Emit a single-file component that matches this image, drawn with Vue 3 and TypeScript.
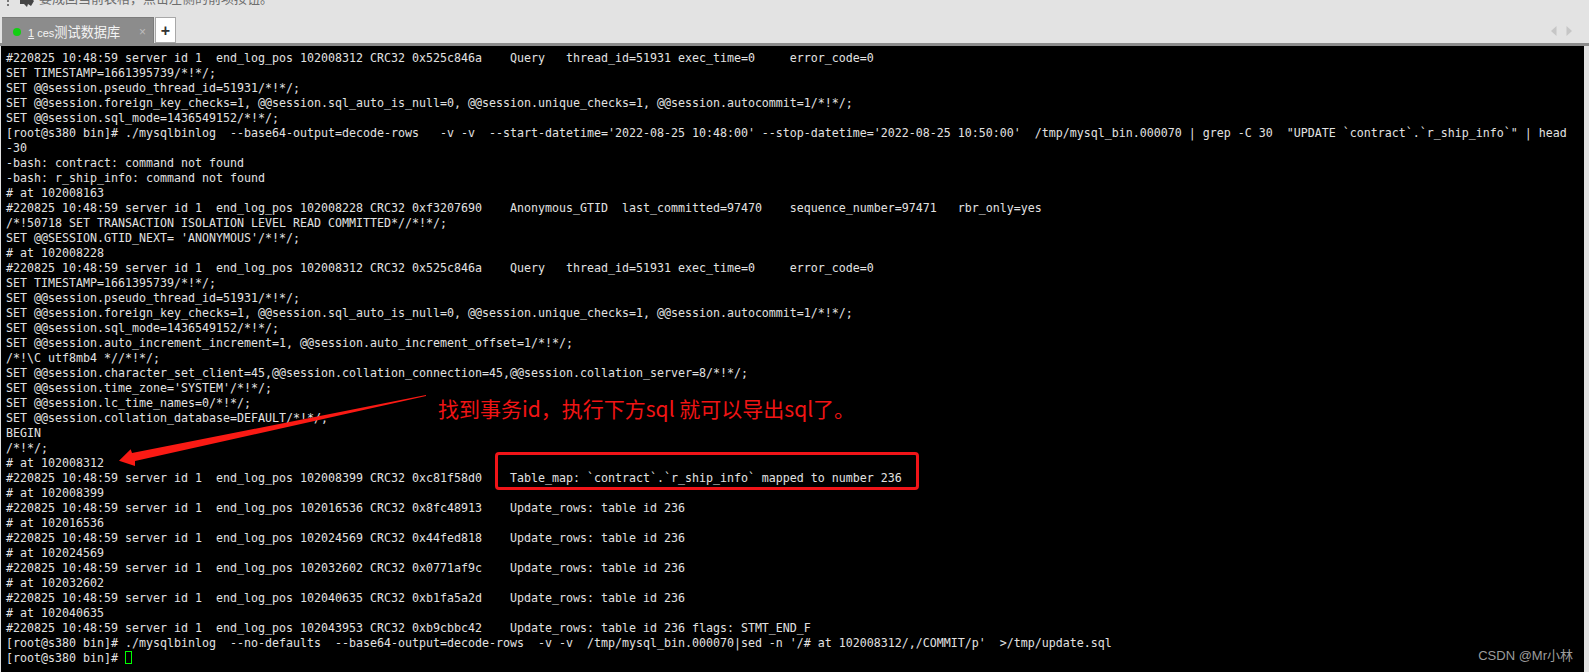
<script setup lang="ts">
const prefix = '#220825 10:48:59 server id 1  end_log_pos '
const lines: string[] = [
  prefix + "102008312 CRC32 0x525c846a    Query   thread_id=51931 exec_time=0     error_code=0",
  "SET TIMESTAMP=1661395739/*!*/;",
  "SET @@session.pseudo_thread_id=51931/*!*/;",
  "SET @@session.foreign_key_checks=1, @@session.sql_auto_is_null=0, @@session.unique_checks=1, @@session.autocommit=1/*!*/;",
  "SET @@session.sql_mode=1436549152/*!*/;",
  "[root@s380 bin]# ./mysqlbinlog  --base64-output=decode-rows   -v -v  --start-datetime='2022-08-25 10:48:00' --stop-datetime='2022-08-25 10:50:00'  /tmp/mysql_bin.000070 | grep -C 30  \"UPDATE `contract`.`r_ship_info`\" | head",
  "-30",
  "-bash: contract: command not found",
  "-bash: r_ship_info: command not found",
  "# at 102008163",
  prefix + "102008228 CRC32 0xf3207690    Anonymous_GTID  last_committed=97470    sequence_number=97471   rbr_only=yes",
  "/*!50718 SET TRANSACTION ISOLATION LEVEL READ COMMITTED*//*!*/;",
  "SET @@SESSION.GTID_NEXT= 'ANONYMOUS'/*!*/;",
  "# at 102008228",
  prefix + "102008312 CRC32 0x525c846a    Query   thread_id=51931 exec_time=0     error_code=0",
  "SET TIMESTAMP=1661395739/*!*/;",
  "SET @@session.pseudo_thread_id=51931/*!*/;",
  "SET @@session.foreign_key_checks=1, @@session.sql_auto_is_null=0, @@session.unique_checks=1, @@session.autocommit=1/*!*/;",
  "SET @@session.sql_mode=1436549152/*!*/;",
  "SET @@session.auto_increment_increment=1, @@session.auto_increment_offset=1/*!*/;",
  "/*!\\C utf8mb4 *//*!*/;",
  "SET @@session.character_set_client=45,@@session.collation_connection=45,@@session.collation_server=8/*!*/;",
  "SET @@session.time_zone='SYSTEM'/*!*/;",
  "SET @@session.lc_time_names=0/*!*/;",
  "SET @@session.collation_database=DEFAULT/*!*/;",
  "BEGIN",
  "/*!*/;",
  "# at 102008312",
  prefix + "102008399 CRC32 0xc81f58d0    Table_map: `contract`.`r_ship_info` mapped to number 236",
  "# at 102008399",
  prefix + "102016536 CRC32 0x8fc48913    Update_rows: table id 236",
  "# at 102016536",
  prefix + "102024569 CRC32 0x44fed818    Update_rows: table id 236",
  "# at 102024569",
  prefix + "102032602 CRC32 0x0771af9c    Update_rows: table id 236",
  "# at 102032602",
  prefix + "102040635 CRC32 0xb1fa5a2d    Update_rows: table id 236",
  "# at 102040635",
  prefix + "102043953 CRC32 0xb9cbbc42    Update_rows: table id 236 flags: STMT_END_F",
  "[root@s380 bin]# ./mysqlbinlog  --no-defaults  --base64-output=decode-rows  -v -v  /tmp/mysql_bin.000070|sed -n '/# at 102008312/,/COMMIT/p'  >/tmp/update.sql",
]
</script>

<template>
  <div class="app">
    <div class="hintbar">
      <span class="grip"></span>
      <svg class="hinticon" width="14" height="7" viewBox="0 0 14 7">
        <path d="M0 0h13l1 1-3 5-3-2-1 3-3-3-4 0z" fill="#444" />
      </svg>
      <span class="hint">要成回当前表格，点击左侧的前项按钮。</span>
    </div>
    <div class="tabbar">
      <div class="tab">
        <span class="dot"></span>
        <span class="tabtitle"><u>1</u> ces<span class="cjk">测试数据库</span></span>
        <span class="close">×</span>
      </div>
      <div class="plus">+</div>
      <div class="arrows">
        <svg width="21" height="10" viewBox="0 0 21 10">
          <path d="M5.500 0v10L0 5z" fill="#c6c6c6" />
          <path d="M15.500 0v10l5.500-5z" fill="#c6c6c6" />
        </svg>
      </div>
    </div>
    <div class="rule"></div>
    <div class="terminal">
      <div v-for="(line, i) in lines" :key="i" class="line">{{ line }}</div>
      <div class="line">[root@s380 bin]# <span class="cursor"></span></div>

      <svg class="arrow" width="320" height="80" viewBox="0 0 320 80">
        <path d="M310 0 L16 58 L14.700 54.300 L3 65.700 L19 71 L19 66 L310 1z" fill="#fa1a14" />
      </svg>
      <div class="note">找到事务id，执行下方sql 就可以导出sql了。</div>
      <div class="box"></div>
      <div class="mark">CSDN @Mr小林</div>
    </div>
  </div>
</template>

<style>
html, body { margin: 0; background: #e3e3e3; }
</style>

<style scoped>
.app {
  width: 1589px;
  height: 672px;
  display: flex;
  flex-direction: column;
  overflow: hidden;
  background: #e3e3e3;
  font-family: "Liberation Sans", "Noto Sans CJK SC", sans-serif;
}
.hintbar {
  height: 17px;
  flex: none;
  display: flex;
  align-items: flex-start;
  overflow: hidden;
  padding-left: 7px;
  box-sizing: border-box;
}
.grip {
  width: 2px;
  height: 8px;
  margin-right: 11px;
  flex: none;
  background: repeating-linear-gradient(#777 0 2px, transparent 2px 4px);
}
.hinticon { margin-right: 5px; flex: none; }
.hint {
  font-size: 13px;
  line-height: 14px;
  margin-top: -9px;
  color: #6e6e6e;
  font-family: "Noto Sans CJK SC", sans-serif;
}
.tabbar {
  height: 26px;
  flex: none;
  display: flex;
  align-items: stretch;
  padding-left: 2px;
}
.tab {
  width: 152px;
  box-sizing: border-box;
  background: #8c8c8c;
  border-top: 1px solid #7c7c7c;
  border-right: 1px solid #7c7c7c;
  display: flex;
  align-items: center;
  padding-left: 11px;
  padding-top: 2px;
  color: #f4f4f4;
  font-size: 11px;
}
.dot {
  width: 8px;
  height: 8px;
  border-radius: 50%;
  background: #12cf12;
  margin-right: 7px;
  flex: none;
}
.tabtitle { width: 111px; white-space: pre; font-size: 11px; }
.cjk { font-size: 13.200px; font-family: "Noto Sans CJK SC", sans-serif; }
.close { color: #bdbdbd; font-size: 12px; }
.plus {
  width: 21px;
  margin-left: 1px;
  box-sizing: border-box;
  background: #fff;
  border: 1px solid #a8a8a8;
  display: flex;
  align-items: center;
  justify-content: center;
  color: #333;
  font-size: 16px;
  font-weight: 700;
  padding-top: 1px;
}
.arrows {
  margin-left: auto;
  margin-right: 17px;
  display: flex;
  align-items: center;
  padding-top: 2px;
}
.rule {
  height: 3px;
  flex: none;
  background: #8c8c8c;
}
.terminal {
  flex: 1;
  position: relative;
  margin-left: 1px;
  margin-right: 5px;
  box-sizing: border-box;
  padding: 5px 0 0 5px;
  background: #000;
  color: #e2e2e2;
  font-family: "DejaVu Sans Mono", monospace;
  font-size: 11.630px;
}
.line {
  height: 15px;
  line-height: 15px;
  white-space: pre;
}
.cursor {
  display: inline-block;
  width: 7px;
  height: 13px;
  box-sizing: border-box;
  border: 1px solid #00ff00;
  vertical-align: -2px;
}
.arrow {
  position: absolute;
  left: 115px;
  top: 349px;
}
.note {
  position: absolute;
  left: 437px;
  top: 349px;
  color: #f01414;
  font-family: "Noto Sans CJK SC", sans-serif;
  font-size: 21px;
  line-height: 26px;
  white-space: pre;
}
.box {
  position: absolute;
  left: 494px;
  top: 406px;
  width: 424px;
  height: 38px;
  box-sizing: border-box;
  border: 3px solid #f01418;
  border-radius: 4px;
}
.mark {
  position: absolute;
  right: 11px;
  bottom: 8px;
  color: #9c9c9c;
  font-family: "Liberation Sans", "Noto Sans CJK SC", sans-serif;
  font-size: 13px;
  line-height: 16px;
}
</style>
